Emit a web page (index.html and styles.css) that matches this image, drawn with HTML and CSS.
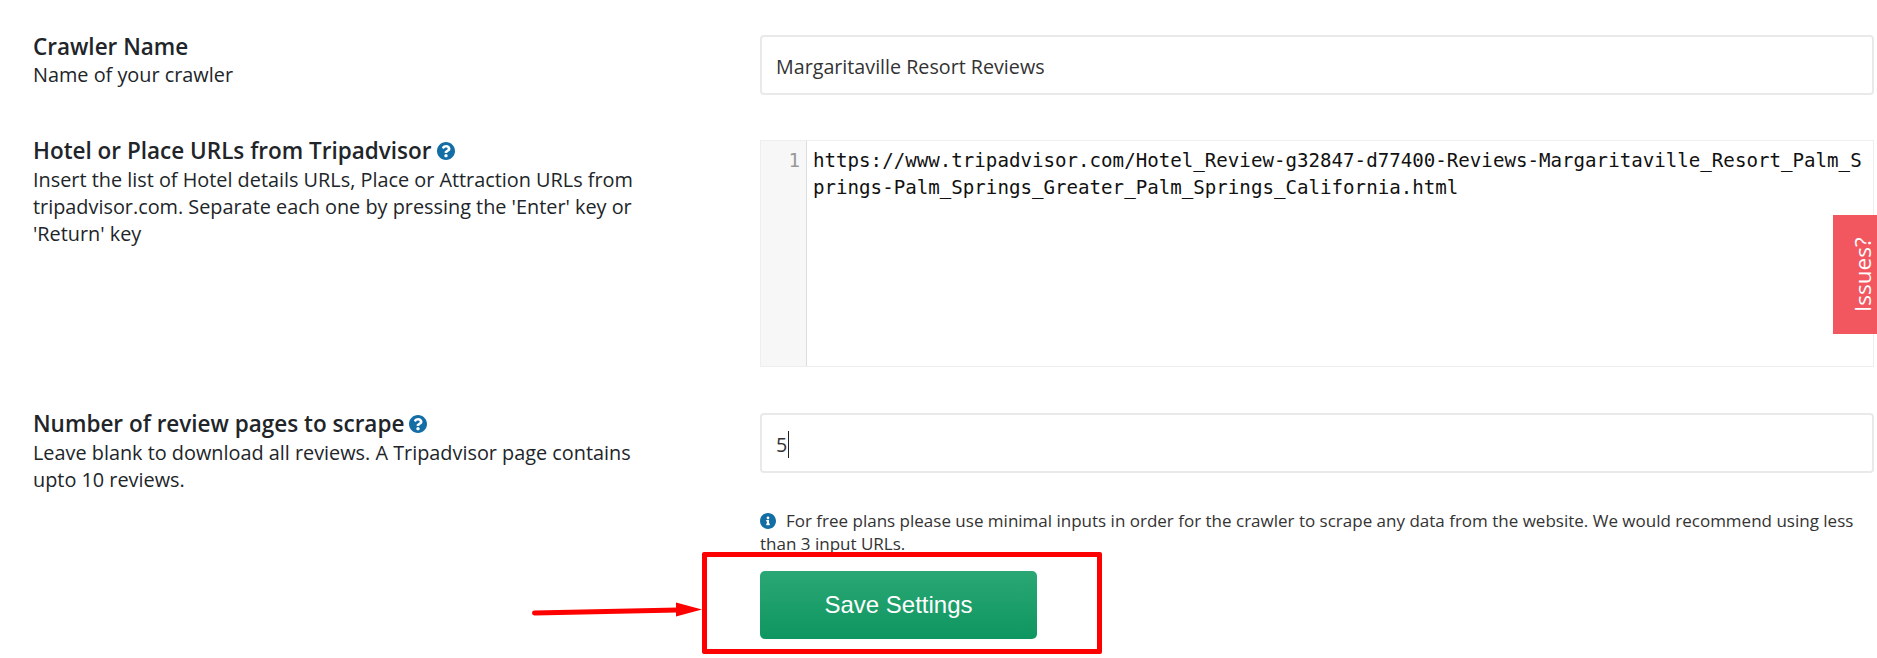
FILE: index.html
```html
<!DOCTYPE html>
<html lang="en">
<head>
<meta charset="utf-8">
<title>Crawler settings</title>
<link rel="stylesheet" href="styles.css">
</head>
<body>
<svg class="icon-defs" width="0" height="0" aria-hidden="true">
  <symbol id="q" viewBox="8 8 496 496"><path d="M504 256c0 136.997-111.043 248-248 248S8 392.997 8 256C8 119.083 119.043 8 256 8s248 111.083 248 248zM262.655 90c-54.497 0-89.255 22.957-116.549 63.758-3.536 5.286-2.353 12.415 2.715 16.258l34.699 26.31c5.205 3.947 12.621 3.008 16.665-2.122 17.864-22.658 30.113-35.797 57.303-35.797 20.429 0 45.698 13.148 45.698 32.958 0 14.976-12.363 22.667-32.534 33.976C247.128 238.528 216 254.941 216 296v4c0 6.627 5.373 12 12 12h56c6.627 0 12-5.373 12-12v-1.333c0-28.462 83.186-29.647 83.186-106.667 0-58.002-60.165-102-116.531-102zM256 338c-25.365 0-46 20.635-46 46 0 25.364 20.635 46 46 46s46-20.636 46-46c0-25.365-20.635-46-46-46z"/></symbol>
  <symbol id="i" viewBox="8 8 496 496"><path d="M256 8C119.043 8 8 119.083 8 256c0 136.997 111.043 248 248 248s248-111.003 248-248C504 119.083 392.957 8 256 8zm0 110c23.196 0 42 18.804 42 42s-18.804 42-42 42-42-18.804-42-42 18.804-42 42-42zm56 254c0 6.627-5.373 12-12 12h-88c-6.627 0-12-5.373-12-12v-24c0-6.627 5.373-12 12-12h12v-64h-12c-6.627 0-12-5.373-12-12v-24c0-6.627 5.373-12 12-12h64c6.627 0 12 5.373 12 12v100h12c6.627 0 12 5.373 12 12v24z"/></symbol>
</svg>
<main class="form">
  <section class="row row-name">
    <div class="label">
      <h3 class="title">Crawler Name</h3>
      <p class="desc">Name of your crawler</p>
    </div>
    <div class="control"><div class="input">Margaritaville Resort Reviews</div></div>
  </section>
  <section class="row row-urls">
    <div class="label">
      <h3 class="title">Hotel or Place URLs from Tripadvisor<svg class="help"><use href="#q"/></svg></h3>
      <p class="desc">Insert the list of Hotel details URLs, Place or Attraction URLs from<br>tripadvisor.com. Separate each one by pressing the 'Enter' key or<br>'Return' key</p>
    </div>
    <div class="control">
      <div class="editor">
        <div class="gutter">1</div>
        <div class="code">https://www.tripadvisor.com/Hotel_Review-g32847-d77400-Reviews-Margaritaville_Resort_Palm_S<br>prings-Palm_Springs_Greater_Palm_Springs_California.html</div>
      </div>
    </div>
  </section>
  <section class="row row-pages">
    <div class="label">
      <h3 class="title">Number of review pages to scrape<svg class="help"><use href="#q"/></svg></h3>
      <p class="desc">Leave blank to download all reviews. A Tripadvisor page contains<br>upto 10 reviews.</p>
    </div>
    <div class="control">
      <div class="input">5<span class="caret"></span></div>
      <p class="note"><svg class="info"><use href="#i"/></svg>For free plans please use minimal inputs in order for the crawler to scrape any data from the website. We would recommend using less<br>than 3 input URLs.</p>
      <button class="save" type="button">Save Settings</button>
    </div>
  </section>
</main>
<a class="issues">Issues?</a>
<div class="mark-box"></div>
<svg class="mark-arrow" width="172" height="16" viewBox="0 0 172 16" aria-hidden="true">
  <path d="M2.5 11 L146 8" stroke="#fe0000" stroke-width="5" stroke-linecap="round" fill="none"/>
  <path d="M144 0.5 L170 7.5 L144 14.5 Z" fill="#fe0000"/>
</svg>
</body>
</html>
```
FILE: styles.css
```css
* { box-sizing: border-box; }
html, body { margin: 0; height: 658px; overflow: hidden; background: #fff; }
body {
  font-family: "Open Sans", "Noto Sans", sans-serif;
  font-size: 19.85px;
  line-height: 27px;
  color: #212529;
  position: relative;
}
.icon-defs { position: absolute; }
.form { padding: 33px 3px 0 33px; }
.row {
  display: grid;
  grid-template-columns: 727px 1114px;
}
.row-urls { margin-top: 42px; }
.row-pages { margin-top: 43px; }
.title {
  margin: 0 0 1px;
  font-size: 22.5px;
  font-weight: 600;
  line-height: 27px;
  color: #212529;
  display: flex;
  align-items: center;
}
.row-urls .title, .row-pages .title { margin-bottom: 2px; }
.desc { margin: 0; }
.control { padding-top: 2px; }
.row-urls .control, .row-pages .control { padding-top: 3px; }
.input {
  height: 60px;
  border: 2px solid #e9e9e9;
  border-radius: 4px;
  padding: 2px 14px 0;
  display: flex;
  align-items: center;
  background: #fff;
  color: #333;
  font-size: 19.7px;
}
.caret {
  width: 1px;
  height: 27px;
  background: #222;
  margin-left: 1px;
}
.editor {
  height: 227px;
  border: 1px solid #eee;
  display: flex;
}
.gutter {
  width: 46px;
  flex: none;
  background: #f7f7f7;
  border-right: 1px solid #ddd;
  color: #999;
  text-align: right;
  padding: 6px 6px 0 0;
  font: 19.15px/27px "DejaVu Sans Mono", monospace;
}
.code {
  padding: 6px 0 0 6px;
  font: 19.15px/27px "DejaVu Sans Mono", monospace;
  color: #111;
  white-space: nowrap;
}
.help {
  width: 18px;
  height: 18px;
  margin-left: 5px;
  fill: #146ea6;
}
.note {
  margin: 36px 0 0;
  font-size: 17px;
  line-height: 23px;
  color: #333;
}
.info {
  width: 16px;
  height: 16px;
  fill: #146ea6;
  margin-right: 10px;
  vertical-align: -2px;
}
.save {
  display: block;
  width: 277px;
  height: 68px;
  margin-top: 16px;
  border: 0;
  border-radius: 5px;
  background: linear-gradient(#2aa775, #0f9660);
  color: #fff;
  font: 24px "Liberation Sans", sans-serif;
}
.issues {
  position: absolute;
  right: 0;
  top: 215px;
  width: 44px;
  height: 119px;
  background: #f2575f;
  color: #fff;
  font-size: 22.5px;
  writing-mode: vertical-rl;
  transform: rotate(180deg);
  display: flex;
  align-items: center;
  justify-content: center;
  padding-right: 14px;
}
.mark-box {
  position: absolute;
  left: 702px;
  top: 552px;
  width: 400px;
  height: 102px;
  border: 5px solid #fe0000;
  border-radius: 2px;
}
.mark-arrow {
  position: absolute;
  left: 532px;
  top: 602px;
}
```
